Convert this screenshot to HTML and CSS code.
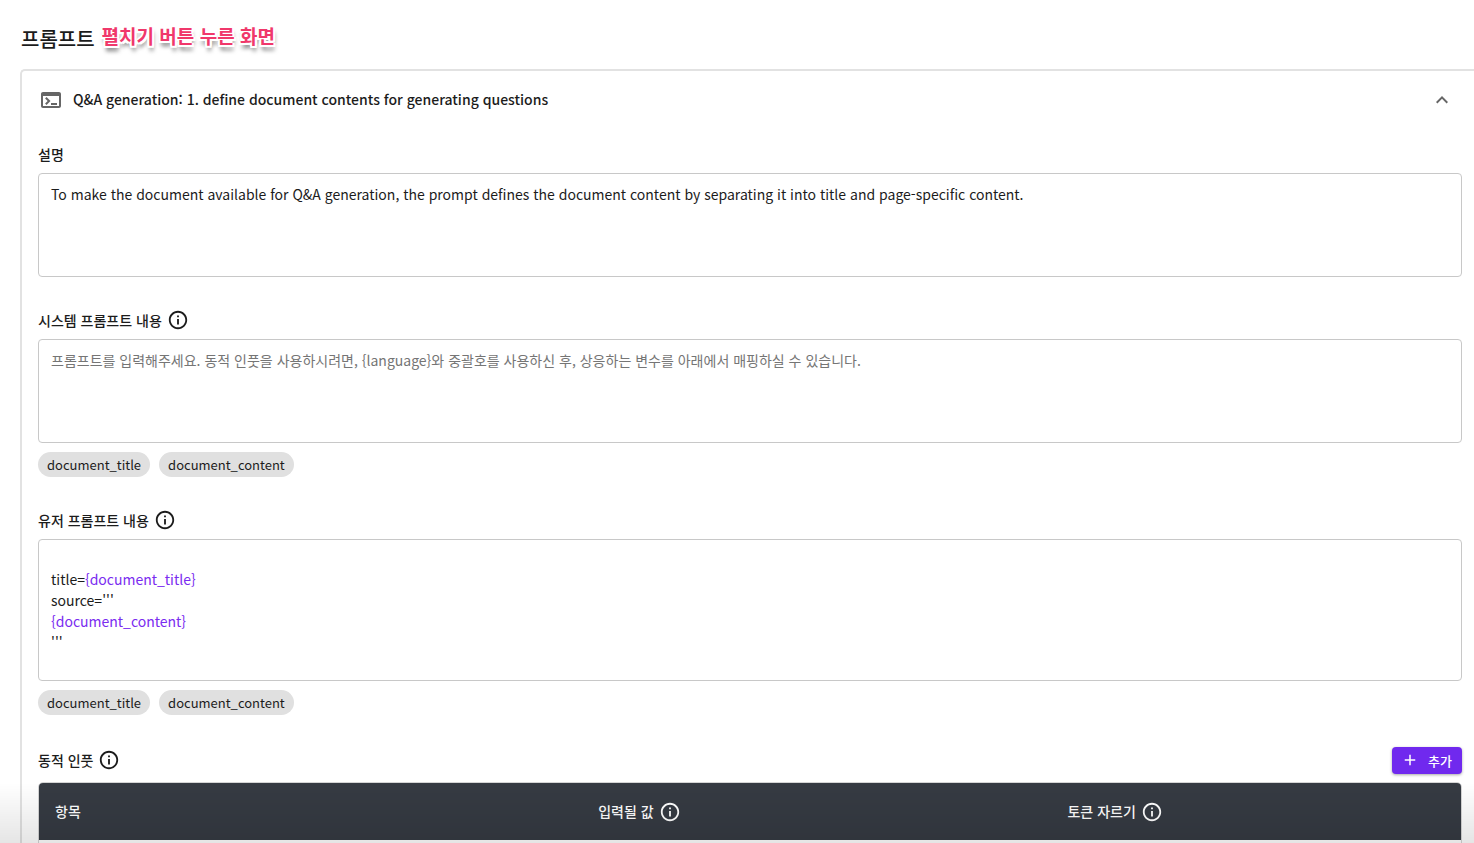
FILE: index.html
```html
<!DOCTYPE html>
<html lang="ko">
<head>
    <meta charset="UTF-8">
    <meta name="viewport" content="width=device-width, initial-scale=1.0">
    <title>프롬프트</title>
    <link rel="stylesheet" href="styles.css">
</head>
<body>
    <!-- Shared icons -->
    <svg class="icon-defs" aria-hidden="true">
        <symbol id="icon-info" viewBox="0 0 24 24">
            <path d="M11 7h2v2h-2zm0 4h2v6h-2zm1-9C6.48 2 2 6.48 2 12s4.48 10 10 10 10-4.48 10-10S17.52 2 12 2zm0 18c-4.41 0-8-3.59-8-8s3.59-8 8-8 8 3.59 8 8-3.59 8-8 8z"/>
        </symbol>
    </svg>

    <header class="page-header">
        <h1>프롬프트</h1>
        <span class="note">펼치기 버튼 누른 화면</span>
    </header>

    <main class="card">
        <div class="card-header">
            <svg class="icon terminal" viewBox="0 0 24 24"><path d="M20 4H4c-1.11 0-2 .9-2 2v12c0 1.1.89 2 2 2h16c1.1 0 2-.9 2-2V6c0-1.1-.89-2-2-2zm0 14H4V8h16v10zm-2-1h-6v-2h6v2zM7.5 17l-1.41-1.41L8.67 13l-2.59-2.59L7.5 9l4 4-4 4z"/></svg>
            <h2>Q&amp;A generation: 1. define document contents for generating questions</h2>
            <button class="collapse" aria-label="접기">
                <svg class="icon" viewBox="0 0 24 24"><path d="M12 8l-6 6 1.41 1.41L12 10.83l4.59 4.58L18 14z"/></svg>
            </button>
        </div>

        <section class="field">
            <div class="field-label"><label for="description">설명</label></div>
            <textarea class="box" id="description">To make the document available for Q&amp;A generation, the prompt defines the document content by separating it into title and page-specific content.</textarea>
        </section>

        <section class="field">
            <div class="field-label">
                <label for="systemPrompt">시스템 프롬프트 내용</label>
                <svg class="icon info"><use href="#icon-info"/></svg>
            </div>
            <textarea class="box" id="systemPrompt" placeholder="프롬프트를 입력해주세요. 동적 인풋을 사용하시려면, {language}와 중괄호를 사용하신 후, 상응하는 변수를 아래에서 매핑하실 수 있습니다."></textarea>
            <div class="chips">
                <span class="chip">document_title</span>
                <span class="chip">document_content</span>
            </div>
        </section>

        <section class="field">
            <div class="field-label">
                <span id="userPromptLabel">유저 프롬프트 내용</span>
                <svg class="icon info"><use href="#icon-info"/></svg>
            </div>
            <!-- Editable div so the variables can be highlighted -->
            <div class="box editor" contenteditable="true" spellcheck="false" role="textbox" aria-multiline="true" aria-labelledby="userPromptLabel">
                <div><br></div>
                <div>title=<span class="variable">{document_title}</span></div>
                <div>source='''</div>
                <div><span class="variable">{document_content}</span></div>
                <div>'''</div>
            </div>
            <div class="chips">
                <span class="chip">document_title</span>
                <span class="chip">document_content</span>
            </div>
        </section>

        <section class="field inputs">
            <div class="field-label">
                <span id="inputsLabel">동적 인풋</span>
                <svg class="icon info"><use href="#icon-info"/></svg>
                <button class="add-button">
                    <svg class="icon plus" viewBox="0 0 24 24"><path d="M19 13h-6v6h-2v-6H5v-2h6V5h2v6h6v2z"/></svg>
                    추가
                </button>
            </div>
            <div class="table-wrap">
                <table aria-labelledby="inputsLabel">
                    <thead>
                        <tr>
                            <th class="col-item">항목</th>
                            <th class="col-value"><div class="th-content">입력될 값 <svg class="icon info"><use href="#icon-info"/></svg></div></th>
                            <th class="col-token"><div class="th-content">토큰 자르기 <svg class="icon info"><use href="#icon-info"/></svg></div></th>
                        </tr>
                    </thead>
                    <tbody>
                        <tr><td></td><td></td><td></td></tr>
                    </tbody>
                </table>
            </div>
        </section>
    </main>

    <div class="bottom-fade"></div>
</body>
</html>
```
FILE: styles.css
```css
/* Base */
* {
    box-sizing: border-box;
}

body {
    margin: 0;
    background: #fff;
    color: #1c1c1c;
    font-family: "Noto Sans CJK KR", sans-serif;
    font-size: 14px;
    line-height: 21px;
}

h1,
h2 {
    margin: 0;
    font-weight: 500;
}

button,
textarea {
    font: inherit;
}

.icon-defs {
    display: none;
}

.icon {
    width: 22px;
    height: 22px;
    flex: none;
    fill: currentColor;
}

/* Page title */
.page-header {
    display: flex;
    align-items: flex-start;
    gap: 7px;
    padding: 20px 21px 14px;
}

.page-header h1 {
    padding-top: 2px;
    font-size: 20px;
    line-height: 33px;
}

.note {
    color: #f0386b;
    font-size: 19px;
    font-weight: 700;
    line-height: 31px;
    text-shadow: 2px 0 #fff, -2px 0 #fff, 0 2px #fff, 0 -2px #fff, 2px 2px #fff, -2px 2px #fff, 1px 5px 4px rgba(0, 0, 0, 0.6);
}

/* Card */
.card {
    margin-left: 20px;
    padding: 0 12px 20px 16px;
    border: 2px solid #e2e2e2;
    border-right: none;
    border-radius: 5px 0 0 0;
}

.card-header {
    display: flex;
    align-items: center;
    gap: 10px;
    height: 57px;
    padding: 0 8px 0 1px;
}

.card-header h2 {
    font-size: 14px;
    line-height: 21px;
}

.terminal,
.collapse {
    color: #666;
}

.card-header .icon {
    width: 24px;
    height: 24px;
}

.collapse {
    display: flex;
    margin-left: auto;
    padding: 0;
    border: none;
    background: none;
    cursor: pointer;
}

/* Fields */
.field {
    margin-top: 29px;
}

.card-header + .field {
    margin-top: 12px;
}

.inputs {
    margin-top: 31px;
}

.field-label {
    display: flex;
    align-items: center;
    gap: 5px;
    min-height: 28px;
    margin-bottom: 5px;
    font-weight: 500;
}

.box {
    display: block;
    width: 100%;
    height: 104px;
    padding: 10px 12px;
    border: 1px solid #c8c8c8;
    border-radius: 4px;
    background: #fff;
    color: #1c1c1c;
    resize: none;
    outline: none;
}

.box::placeholder {
    color: #757575;
    opacity: 1;
}

.editor {
    height: auto;
    min-height: 142px;
    padding: 8px 12px;
}

.variable {
    color: #7a2cf0;
}

.chips {
    display: flex;
    gap: 9px;
    margin-top: 9px;
}

.chip {
    padding: 2px 9px;
    border-radius: 13px;
    background: #e0e0e0;
    font-size: 13px;
}

.add-button {
    display: flex;
    align-items: center;
    gap: 9px;
    height: 27px;
    margin-left: auto;
    padding: 0 10px 0 9px;
    border: none;
    border-radius: 4px;
    background: #7029ee;
    box-shadow: 0 1px 3px rgba(0, 0, 0, 0.35);
    color: #fff;
    font-size: 13px;
    font-weight: 500;
    cursor: pointer;
}

.plus {
    width: 18px;
    height: 18px;
}

/* Dynamic input table */
.table-wrap {
    margin-top: 8px;
    overflow: hidden;
    border: 1px solid #d5d5d5;
    border-radius: 5px;
}

table {
    width: 100%;
    border-collapse: collapse;
    table-layout: fixed;
}

th {
    height: 57px;
    padding: 0 16px;
    background: #363b43;
    color: #fff;
    font-weight: 500;
    text-align: left;
}

td {
    height: 57px;
}

.th-content {
    display: flex;
    align-items: center;
    gap: 5px;
}

.col-item {
    width: 38.2%;
}

.col-value {
    width: 33%;
}

/* Fade over the bottom edge of the window */
.bottom-fade {
    position: fixed;
    right: 0;
    bottom: 0;
    left: 0;
    height: 60px;
    background: linear-gradient(rgba(0, 0, 0, 0), rgba(0, 0, 0, 0.1));
    pointer-events: none;
}
```
